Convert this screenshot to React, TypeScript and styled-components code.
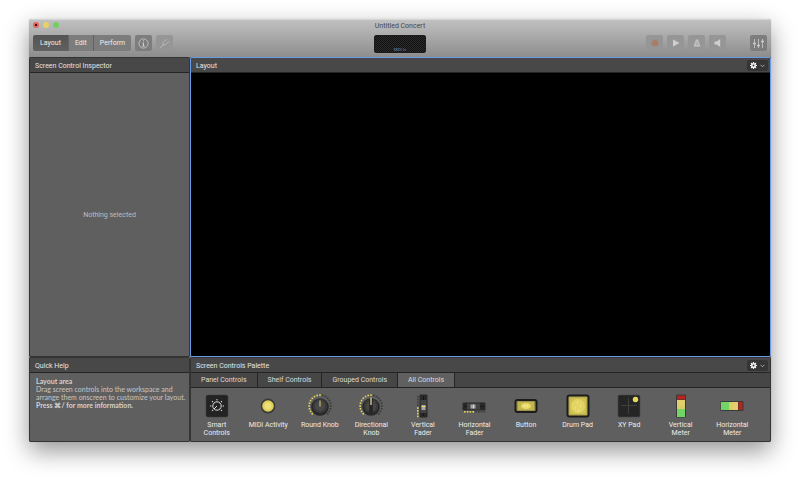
import React from "react";
import styled, { createGlobalStyle, css } from "styled-components";

const GlobalStyle = createGlobalStyle`
  *, *::before, *::after { box-sizing: border-box; }
  body {
    margin: 0;
    background: #fff;
    font-family: Roboto, Inter, "Liberation Sans", sans-serif;
    font-size: 7px;
    line-height: 8px;
    color: #d8d8d8;
  }
  button { font: inherit; color: inherit; border: 0; padding: 0; background: none; }
  h1, h2, p, ul { margin: 0; padding: 0; font: inherit; }
  svg { display: block; }
`;

const Desktop = styled.div`
  min-height: 100vh;
  display: flex;
  padding: 19px 29px 39px;
`;

const Window = styled.div`
  flex: 1;
  min-width: 0;
  display: flex;
  flex-direction: column;
  border-radius: 3px 3px 2px 2px;
  background: #8c8c8c;
  box-shadow: 0 9px 24px rgba(0, 0, 0, 0.42), 0 0 1px rgba(0, 0, 0, 0.3);
`;

const TitleArea = styled.header`
  display: grid;
  grid-template-columns: 1fr auto 1fr;
  height: 38px;
  padding: 0 4px;
  border-radius: 3px 3px 0 0;
  border-top: 1px solid #d6d6d6;
  background: linear-gradient(#c0c0c0, #8d8d8d);
`;

const Side = styled.div`
  display: flex;
  flex-direction: column;
`;

const Lights = styled.div`
  display: flex;
  gap: 4px;
  height: 15px;
  padding: 2px 0 0;
`;

const Light = styled.button<{ $color: string; $edited?: boolean }>`
  width: 6px;
  height: 6px;
  border-radius: 50%;
  background: ${(p) => p.$color};
  ${(p) =>
    p.$edited &&
    css`
      display: grid;
      place-items: center;
      &::after {
        content: "";
        width: 2px;
        height: 2px;
        background: #4a120f;
      }
    `}
`;

const Tools = styled.div<{ $end?: boolean }>`
  display: flex;
  gap: 4px;
  justify-content: ${(p) => (p.$end ? "flex-end" : "flex-start")};
`;

const Segments = styled.div`
  display: flex;
  height: 16px;
  border-radius: 2px;
  overflow: hidden;
`;

const Segment = styled.button<{ $active?: boolean }>`
  padding: 0 6px;
  color: #ececec;
  background: ${(p) => (p.$active ? "linear-gradient(#545454, #606060)" : "#7c7c7c")};
  & + & { border-left: 1px solid #626262; }
  &:first-child { padding: 0 7px; }
`;

const ToolButton = styled.button<{ $dim?: boolean; $apart?: boolean }>`
  display: grid;
  place-items: center;
  width: 17px;
  height: 16px;
  border-radius: 2px;
  color: ${(p) => (p.$dim ? "#bababa" : "#cecece")};
  background: ${(p) => (p.$dim ? "#969696" : "#7d7d7d")};
  ${(p) => p.$apart && css`margin-left: 20px;`}
`;

const Center = styled.div`
  display: flex;
  flex-direction: column;
  align-items: center;
`;

const Title = styled.h1`
  height: 15px;
  padding-top: 2px;
  color: #484848;
`;

const Display = styled.div`
  display: flex;
  align-items: flex-end;
  justify-content: center;
  width: 52px;
  height: 18px;
  border-radius: 2px;
  border: 1px solid #1c1c1c;
  background: repeating-conic-gradient(#101010 0% 25%, #2c2c2c 0% 50%) 0 0 / 2px 2px;
  color: #6385b8;
  font-size: 4px;
  line-height: 5px;
`;

const Body = styled.main`
  flex: 1;
  display: grid;
  grid-template-columns: 161px minmax(0, 1fr);
  grid-template-rows: 1fr auto;
  background: #6c6c6c;
  border-radius: 0 0 2px 2px;
`;

const Panel = styled.section<{ $focused?: boolean }>`
  display: flex;
  flex-direction: column;
  min-width: 0;
  border: 1px solid ${(p) => (p.$focused ? "#6a9be6" : "#343434")};
  border-radius: 2px;
  background: ${(p) => (p.$focused ? "#000" : "#5f5f5f")};
`;

const PanelHeader = styled.div`
  display: flex;
  align-items: center;
  justify-content: space-between;
  height: 15px;
  padding: 1px 2px 0 5px;
  background: #484848;
  border-bottom: 1px solid #242424;
  color: #e4e4e4;
`;

const Action = styled.button`
  display: flex;
  align-items: center;
  justify-content: center;
  gap: 3px;
  width: 21px;
  height: 11px;
  border-radius: 2px;
  background: #353535;
`;

const Empty = styled.p`
  margin: auto;
  color: #bebebe;
`;

const Help = styled.div`
  padding: 4px 2px 4px 6px;
  font-family: Lato, Roboto, sans-serif;
  color: #c6c6c6;
`;

const HelpStrong = styled.p`
  font-weight: 700;
  color: #d2d2d2;
`;

const Tabs = styled.div`
  display: flex;
  height: 15px;
  background: #464646;
  border-bottom: 1px solid #242424;
`;

const Tab = styled.button<{ $active?: boolean }>`
  padding: 0 10px;
  border-right: 1px solid #242424;
  background: ${(p) => (p.$active ? "#606060" : "transparent")};
  color: #dcdcdc;
`;

const Palette = styled.ul`
  display: grid;
  grid-template-columns: repeat(11, minmax(0, 1fr));
  height: 53px;
  padding: 6px 12px 0 0;
  list-style: none;
`;

const Item = styled.li`
  display: flex;
  flex-direction: column;
  align-items: center;
  gap: 3px;
  text-align: center;
  color: #ececec;
`;

const ItemName = styled.span<{ $narrow?: boolean }>`
  width: ${(p) => (p.$narrow ? "min-content" : "auto")};
  white-space: ${(p) => (p.$narrow ? "normal" : "nowrap")};
`;

const yellow = "#e8d95c";

const rad = (deg: number) => (deg * Math.PI) / 180;

function GearMenu({ label }: { label: string }) {
  return (
    <Action aria-label={label}>
      <svg width="7" height="7" viewBox="0 0 14 14" fill="none" stroke="#f0f0f0">
        <circle cx="7" cy="7" r="3.5" strokeWidth="3.2" />
        {[0, 45, 90, 135].map((a) => (
          <path key={a} d="M7 0v3M7 11v3" strokeWidth="2.4" transform={`rotate(${a} 7 7)`} />
        ))}
      </svg>
      <svg width="5" height="4" viewBox="0 0 5 4" fill="none" stroke="#a8a8a8">
        <path d="M.5 .8l2 2 2-2" />
      </svg>
    </Action>
  );
}

function SmartIcon() {
  return (
    <svg width="24" height="24" viewBox="0 0 24 24">
      <rect x="1" y="1" width="22" height="22" rx="2" fill="#232323" stroke="#3c3c3c" strokeWidth=".5" />
      <g stroke="#dedede" fill="none">
        <circle cx="12" cy="12" r="4.2" />
        <path d="M12 12l-3 3" />
        {[-135, -90, -45, 0, 45, 90, 135].map((a) => (
          <path key={a} d="M12 5v1.4" transform={`rotate(${a} 12 12)`} />
        ))}
      </g>
    </svg>
  );
}

function LampIcon() {
  return (
    <svg width="24" height="24" viewBox="0 0 24 24">
      <circle cx="12" cy="12" r="7.4" fill="#3a3a38" />
      <circle cx="12" cy="12" r="5.8" fill="#e0d05a" />
      <circle cx="12" cy="12" r="3.4" fill="#ecdf78" />
    </svg>
  );
}

function KnobIcon({ directional = false }: { directional?: boolean }) {
  return (
    <svg width="24" height="24" viewBox="0 0 24 24">
      {Array.from({ length: 19 }, (_, i) => {
        const a = -135 + i * 15;
        return (
          <rect
            key={a}
            x={11.2 + 10.9 * Math.sin(rad(a))}
            y={11.2 - 10.9 * Math.cos(rad(a))}
            width="1.6"
            height="1.6"
            fill={a <= 0 ? yellow : "#383838"}
          />
        );
      })}
      <circle cx="12" cy="13" r="8.8" fill="#292929" />
      <circle cx="12" cy="12" r="7.2" fill="#3b3b3b" />
      <circle cx="12" cy="12" r="5" fill="#484848" />
      {directional ? (
        <>
          <path d="M10.2 4.5h3.6v15h-3.6z" fill="#262626" />
          <path d="M12 3.5v7.5" stroke="#eee6a0" strokeWidth="1.2" />
        </>
      ) : (
        <path d="M12 6.5v6" stroke="#c9bd70" strokeWidth="1.2" />
      )}
    </svg>
  );
}

function Fader({ horizontal = false }: { horizontal?: boolean }) {
  return (
    <svg width="24" height="24" viewBox="0 0 24 24">
      {Array.from({ length: 8 }, (_, i) => (
        <rect
          key={i}
          x={horizontal ? 2 + i * 2.8 : 6}
          y={horizontal ? 17 : 2 + i * 2.8}
          width="1.6"
          height="1.6"
          fill={(horizontal ? i < 4 : i > 3) ? yellow : "#3c3c3c"}
        />
      ))}
      <g transform={horizontal ? "rotate(90 12 12)" : undefined}>
        <rect x="8.5" y=".5" width="8" height="23" rx="1.2" fill="#292929" />
        <path d="M12.5 2v20" stroke="#171717" />
        <rect x="9.5" y="6" width="6" height="13" fill="#434343" />
        <path d={horizontal ? "M10.5 10.5h4v5h-4z" : "M10.5 11h4v5h-4z"} fill="#a5a5a5" />
        <path d="M10.5 12.5h4" stroke={yellow} />
      </g>
    </svg>
  );
}

function ButtonIcon() {
  return (
    <svg width="24" height="24" viewBox="0 0 24 24">
      <rect x="1.5" y="6" width="21" height="12" rx="2" fill="#9d9449" stroke="#1c1c1c" strokeWidth="2" />
      <rect x="4" y="8" width="16" height="8" rx="1" fill="#c2b650" />
      <ellipse cx="12" cy="12" rx="5" ry="3" fill="#eadb6c" />
      <path d="M10 12h1m2 0h1" stroke="#fffbe0" />
    </svg>
  );
}

function PadIcon() {
  return (
    <svg width="24" height="24" viewBox="0 0 24 24">
      <rect x="1.5" y="1.5" width="21" height="21" rx="2" fill="#b9ad4c" stroke="#1c1c1c" strokeWidth="2" />
      <rect x="4" y="4" width="16" height="16" rx="2" fill="#cfc154" />
      <circle cx="12" cy="12" r="7" fill="#e3d463" />
      <path d="M11 9h1m2 3h1m-6 2h1m2 3h1" stroke="#faf4bd" />
    </svg>
  );
}

function XYIcon() {
  return (
    <svg width="24" height="24" viewBox="0 0 24 24">
      <rect x="1" y="1" width="22" height="22" rx="1.5" fill="#252525" stroke="#474747" strokeWidth=".6" />
      <path d="M4 11.5h16M11.5 4v16" stroke="#404040" />
      <circle cx="18.5" cy="5.5" r="2.7" fill={yellow} />
    </svg>
  );
}

function MeterIcon({ horizontal = false }: { horizontal?: boolean }) {
  return (
    <svg width="24" height="24" viewBox="0 0 24 24">
      <g transform={horizontal ? "rotate(90 12 12)" : undefined}>
        <rect x="7" y=".5" width="10" height="23" rx=".7" fill="#3a3a3a" />
        <path d="M8 1.5h8v4H8z" fill="#b3241e" />
        <path d="M8 6h8v9H8z" fill="#e3cf6c" />
        <path d="M8 15h8v8H8z" fill="#72d465" />
        <path d="M9 12h1m2 0h1m2 0h1M8 14h1m2 0h1m2 0h1" stroke="#a9c855" />
      </g>
    </svg>
  );
}

const controls: { name: string; icon: React.ReactNode; narrow?: boolean }[] = [
  { name: "Smart Controls", icon: <SmartIcon />, narrow: true },
  { name: "MIDI Activity", icon: <LampIcon /> },
  { name: "Round Knob", icon: <KnobIcon /> },
  { name: "Directional Knob", icon: <KnobIcon directional />, narrow: true },
  { name: "Vertical Fader", icon: <Fader />, narrow: true },
  { name: "Horizontal Fader", icon: <Fader horizontal />, narrow: true },
  { name: "Button", icon: <ButtonIcon /> },
  { name: "Drum Pad", icon: <PadIcon /> },
  { name: "XY Pad", icon: <XYIcon /> },
  { name: "Vertical Meter", icon: <MeterIcon />, narrow: true },
  { name: "Horizontal Meter", icon: <MeterIcon horizontal />, narrow: true },
];

const tabs = ["Panel Controls", "Shelf Controls", "Grouped Controls", "All Controls"];

export default function App() {
  return (
    <>
      <GlobalStyle />
      <Desktop>
        <Window>
          <TitleArea>
            <Side>
              <Lights>
                <Light $color="#e2635b" $edited aria-label="Close" />
                <Light $color="#e5d165" aria-label="Minimize" />
                <Light $color="#70d160" aria-label="Zoom" />
              </Lights>
              <Tools>
                <Segments>
                  <Segment $active aria-pressed>Layout</Segment>
                  <Segment>Edit</Segment>
                  <Segment>Perform</Segment>
                </Segments>
                <ToolButton aria-label="Inspector">
                  <svg width="11" height="11" viewBox="0 0 11 11" fill="none" stroke="currentColor">
                    <circle cx="5.5" cy="5.5" r="4.6" strokeWidth=".8" />
                    <path d="M5.5 2.4v1.2M4.5 5h1v3M4.2 8.1h2.6" />
                  </svg>
                </ToolButton>
                <ToolButton $dim aria-label="Tuner">
                  <svg width="11" height="11" viewBox="0 0 11 11" fill="none" stroke="currentColor">
                    <path d="M1 10l3.2-3.2M4 7V4.8L7.7 1M4 7h2.2L10 3.2" strokeWidth=".9" />
                  </svg>
                </ToolButton>
              </Tools>
            </Side>
            <Center>
              <Title>Untitled Concert</Title>
              <Display>MIDI In</Display>
            </Center>
            <Side>
              <Lights />
              <Tools $end>
                <ToolButton $dim aria-label="Record">
                  <svg width="8" height="8" viewBox="0 0 8 8">
                    <circle cx="4" cy="4" r="3.5" fill="#a38370" />
                    <path d="M4 1.5v5M2.5 3v3M5.5 3v3" stroke="#b8735a" strokeWidth=".8" />
                  </svg>
                </ToolButton>
                <ToolButton $dim aria-label="Play">
                  <svg width="8" height="8" viewBox="0 0 8 8" fill="#cfcfcf">
                    <path d="M1 .5l6.5 3.5L1 7.5z" />
                  </svg>
                </ToolButton>
                <ToolButton $dim aria-label="Metronome">
                  <svg width="8" height="8" viewBox="0 0 8 8">
                    <path d="M3 .5h2L7.3 7.5H.7z" fill="#c6c6c6" />
                    <path d="M4 2v3M2.5 5.5h3" stroke="#999" strokeWidth=".7" />
                  </svg>
                </ToolButton>
                <ToolButton $dim aria-label="Mute">
                  <svg width="8" height="8" viewBox="0 0 8 8" fill="#cfcfcf">
                    <path d="M.5 2.4h2.2L6.2 0v8L2.7 5.6H.5z" />
                  </svg>
                </ToolButton>
                <ToolButton $apart aria-label="Mixer">
                  <svg width="11" height="9" viewBox="0 0 11 9" fill="none" stroke="currentColor">
                    <path d="M1.5 0v9M5.5 0v9M9.5 0v9" strokeWidth=".8" />
                    <path d="M0 4.5h3M4 6.5h3M8 2.5h3" strokeWidth="1.6" />
                  </svg>
                </ToolButton>
              </Tools>
            </Side>
          </TitleArea>
          <Body>
            <Panel>
              <PanelHeader>
                <h2>Screen Control Inspector</h2>
              </PanelHeader>
              <Empty>Nothing selected</Empty>
            </Panel>
            <Panel $focused>
              <PanelHeader>
                <h2>Layout</h2>
                <GearMenu label="Layout actions" />
              </PanelHeader>
            </Panel>
            <Panel>
              <PanelHeader>
                <h2>Quick Help</h2>
              </PanelHeader>
              <Help>
                <HelpStrong>Layout area</HelpStrong>
                <p>Drag screen controls into the workspace and arrange them onscreen to customize your layout.</p>
                <HelpStrong>Press ⌘/ for more information.</HelpStrong>
              </Help>
            </Panel>
            <Panel>
              <PanelHeader>
                <h2>Screen Controls Palette</h2>
                <GearMenu label="Palette actions" />
              </PanelHeader>
              <Tabs role="tablist">
                {tabs.map((t) => (
                  <Tab key={t} role="tab" $active={t === "All Controls"} aria-selected={t === "All Controls"}>
                    {t}
                  </Tab>
                ))}
              </Tabs>
              <Palette>
                {controls.map((c) => (
                  <Item key={c.name}>
                    {c.icon}
                    <ItemName $narrow={c.narrow}>{c.name}</ItemName>
                  </Item>
                ))}
              </Palette>
            </Panel>
          </Body>
        </Window>
      </Desktop>
    </>
  );
}
